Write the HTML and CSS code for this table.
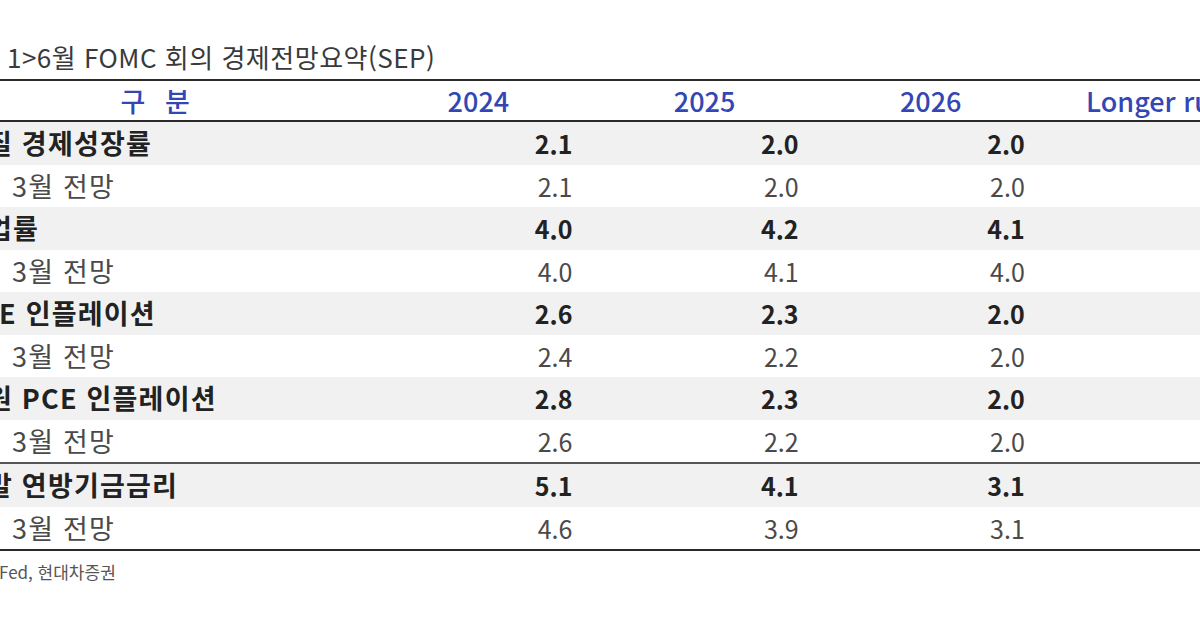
FILE: index.html
```html
<!DOCTYPE html>
<html lang="ko">
<head>
<meta charset="utf-8">
<link rel="stylesheet" href="styles.css">
</head>
<body>
<div class="page">
  <div class="title">1&gt;6월 FOMC 회의 경제전망요약(SEP)</div>
  <table class="sep">
    <colgroup>
      <col class="c-label"><col class="c-val"><col class="c-val"><col class="c-val"><col class="c-val">
    </colgroup>
    <thead>
      <tr><th>구 분</th><th>2024</th><th>2025</th><th>2026</th><th>Longer run</th></tr>
    </thead>
    <tbody>
      <tr class="main"><td class="lbl">실질 경제성장률</td><td>2.1</td><td>2.0</td><td>2.0</td><td>1.8</td></tr>
      <tr class="sub"><td class="lbl">3월 전망</td><td>2.1</td><td>2.0</td><td>2.0</td><td>1.8</td></tr>
      <tr class="main"><td class="lbl">실업률</td><td>4.0</td><td>4.2</td><td>4.1</td><td>4.2</td></tr>
      <tr class="sub"><td class="lbl">3월 전망</td><td>4.0</td><td>4.1</td><td>4.0</td><td>4.1</td></tr>
      <tr class="main"><td class="lbl">PCE 인플레이션</td><td>2.6</td><td>2.3</td><td>2.0</td><td>2.0</td></tr>
      <tr class="sub"><td class="lbl">3월 전망</td><td>2.4</td><td>2.2</td><td>2.0</td><td>2.0</td></tr>
      <tr class="main"><td class="lbl">근원 PCE 인플레이션</td><td>2.8</td><td>2.3</td><td>2.0</td><td></td></tr>
      <tr class="sub"><td class="lbl">3월 전망</td><td>2.6</td><td>2.2</td><td>2.0</td><td></td></tr>
      <tr class="main split"><td class="lbl">연말 연방기금금리</td><td>5.1</td><td>4.1</td><td>3.1</td><td>2.8</td></tr>
      <tr class="sub"><td class="lbl">3월 전망</td><td>4.6</td><td>3.9</td><td>3.1</td><td>2.6</td></tr>
    </tbody>
  </table>
  <div class="source">Fed, 현대차증권</div>
</div>
</body>
</html>
```

FILE: styles.css
```css
html, body {
  margin: 0;
  padding: 0;
  background: #ffffff;
  overflow: hidden;
}
.page {
  width: 1200px;
  height: 630px;
  overflow: hidden;
  font-family: "Noto Sans CJK KR", "Noto Sans", sans-serif;
}
.title {
  margin: 42px 0 0 7px;
  height: 30px;
  line-height: 30px;
  font-size: 26px;
  color: #3a3a3a;
  letter-spacing: 0.5px;
  white-space: nowrap;
}
.sep {
  margin: 7px 0 0 -55px;
  width: 1325px;
  table-layout: fixed;
  border-collapse: collapse;
  border-top: 2px solid #2a2a2a;
  border-bottom: 2px solid #2a2a2a;
}
.c-label { width: 420px; }
.c-val { width: 226px; }
.sep th {
  height: 39px;
  padding: 0;
  font-size: 27px;
  font-weight: 500;
  color: #3446b4;
  text-align: center;
  border-bottom: 2px solid #2a2a2a;
  line-height: 39px;
  white-space: nowrap;
}
.sep th:first-child {
  letter-spacing: 6px;
  text-indent: 6px;
}
.sep td {
  height: 42.5px;
  padding: 0 19px 0 0;
  font-size: 25px;
  text-align: right;
  line-height: 42px;
  white-space: nowrap;
}
.sep td.lbl {
  text-align: left;
  padding: 0 0 0 16px;
  font-size: 27px;
  letter-spacing: 1.2px;
}
.main td {
  background: #f1f1f1;
  color: #222;
  font-weight: 700;
}
.sub td {
  background: #ffffff;
  color: #4a4a4a;
  font-weight: 400;
}
.sub td.lbl {
  padding-left: 67px;
}
.split td {
  border-top: 2px solid #555;
}
.source {
  margin: 8px 0 0 -1px;
  font-size: 17px;
  color: #555;
  letter-spacing: 0;
}
```
